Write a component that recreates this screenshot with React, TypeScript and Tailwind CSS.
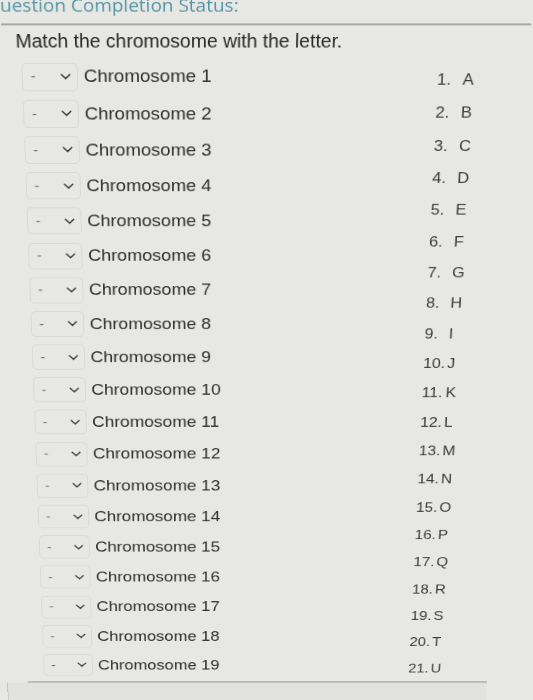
import React from "react";

const chromosomes = Array.from({ length: 19 }, (_, i) => `Chromosome ${i + 1}`);
const letters = "ABCDEFGHIJKLMNOPQRSTU".split("");

const Chevron: React.FC = () => (
  <svg
    width="11"
    height="7"
    viewBox="0 0 11 7"
    fill="none"
    stroke="#3a3a3a"
    strokeWidth="1.5"
    strokeLinecap="round"
    strokeLinejoin="round"
  >
    <path d="M1.2 1.2 5.5 5.6l4.3-4.4" />
  </svg>
);

const MatchSelect: React.FC = () => (
  <div className="flex h-[30px] w-[57px] shrink-0 items-center justify-between rounded-[5px] border border-[#d8d8d5] pl-[8px] pr-[6px]">
    <span className="text-[15px] text-[#6a6a6a]">-</span>
    <Chevron />
  </div>
);

const App: React.FC = () => {
  return (
    <div className="h-[700px] w-[533px] overflow-hidden bg-[#e7e7e4] font-['Liberation_Sans',Arial,sans-serif]">
      <div className="bg-[#e7e7e4] [transform-origin:200px_0] [transform:perspective(1000px)_rotateX(-11.5deg)]">
        {/* Page header, scrolled partly out of view */}
        <div className="h-[24px] overflow-hidden">
          <p className="-ml-[15px] -mt-[7px] whitespace-nowrap font-['Open_Sans',sans-serif] text-[19px] leading-[24px] text-[#5496a6]">
            Question Completion Status:
          </p>
        </div>
        <div className="border-t-2 border-[#a8a8a5]" />

        {/* Question */}
        <p className="pl-[14px] pt-[4px] text-[19.5px] leading-[24px] text-[#262626]">
          Match the chromosome with the letter.
        </p>

        <div className="grid grid-cols-[441px_1fr] pt-[6px]">
          {/* Prompts with answer dropdowns */}
          <div className="flex flex-col pl-[19px]">
            {chromosomes.map((name) => (
              <div key={name} className="flex h-[39.2px] items-center gap-[6px]">
                <MatchSelect />
                <span className="text-[19px] text-[#2e2e2e]">{name}</span>
              </div>
            ))}
          </div>

          {/* Answer choices */}
          <ol className="flex flex-col pt-[5px] text-[17px] text-[#3b3b3b]">
            {letters.map((letter, i) => (
              <li key={letter} className="flex h-[35.35px] items-center">
                <span className="w-[26px]">{i + 1}.</span>
                <span>{letter}</span>
              </li>
            ))}
          </ol>
        </div>

        {/* Next section */}
        <div className="border-t-2 border-[#b4b4b1]" />
        <div className="-ml-[24px] h-[200px] border-l border-[#c4c4c1] bg-[#e2e2df]" />
      </div>
    </div>
  );
};

export default App;
